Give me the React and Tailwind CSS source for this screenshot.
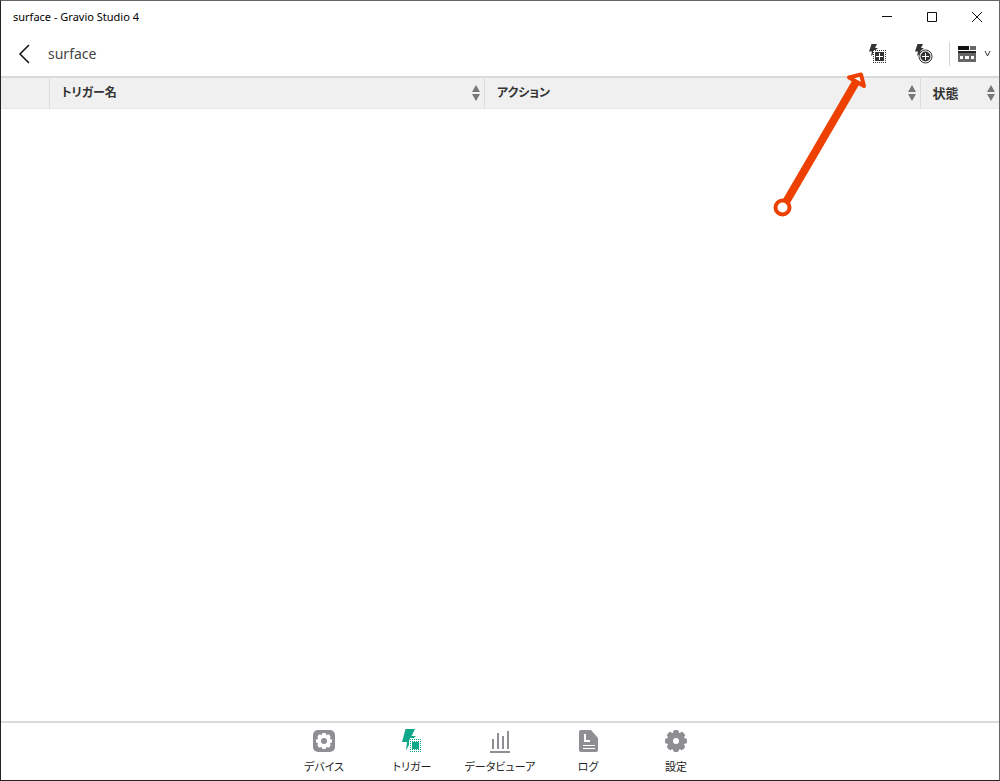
const columns = [
  { label: 'トリガー名', width: '', text: 'text-xs' },
  { label: 'アクション', width: '', text: 'text-xs' },
  { label: '状態', width: 'w-[79px]', text: 'text-[13px]' },
];

const navItems = [
  { id: 'devices', label: 'デバイス', icon: DeviceIcon },
  { id: 'triggers', label: 'トリガー', icon: TriggerIcon },
  { id: 'data', label: 'データビューア', icon: ChartIcon },
  { id: 'logs', label: 'ログ', icon: LogIcon },
  { id: 'settings', label: '設定', icon: SettingsIcon },
];

const gearTeeth = [0, 45, 90, 135, 180, 225, 270, 315];

function Gear({ cx, cy, r, hole, fill, holeFill }) {
  return (
    <g fill={fill}>
      {gearTeeth.map((deg) => (
        <rect
          key={deg}
          x={cx - r * 0.26}
          y={cy - r}
          width={r * 0.52}
          height={r}
          rx={r * 0.16}
          transform={`rotate(${deg} ${cx} ${cy})`}
        />
      ))}
      <circle cx={cx} cy={cy} r={r * 0.82} />
      <circle cx={cx} cy={cy} r={hole} fill={holeFill} />
    </g>
  );
}

function DeviceIcon() {
  return (
    <svg width="24" height="24" viewBox="0 0 24 24">
      <rect x="1" y="1" width="22" height="22" rx="5" fill="#8e8e93" />
      <Gear cx={12} cy={12} r={8} hole={3} fill="#fff" holeFill="#8e8e93" />
    </svg>
  );
}

function TriggerIcon() {
  return (
    <svg width="24" height="24" viewBox="0 0 24 24" fill="#0aa888">
      <path d="M5.500 0H15l-3.500 7H16l-4 3.500H9V16l-3 5.500L7 13H2z" />
      <rect x="10" y="9" width="13" height="14" fill="#fff" />
      <rect x="12" y="13" width="7" height="7" />
      <g stroke="#0aa888" strokeDasharray="1 1">
        <path d="M10 10.500h12M10 12.500h12M10 20.500h12M10 22.500h12" />
        <path d="M10 14.500h2M10 16.500h2M10 18.500h2M20 14.500h2M20 16.500h2M20 18.500h2" />
      </g>
    </svg>
  );
}

function ChartIcon() {
  return (
    <svg width="24" height="24" viewBox="0 0 24 24" fill="#8e8e93">
      <rect x="4" y="10" width="2" height="10" />
      <rect x="9" y="4" width="2" height="16" />
      <rect x="14" y="7" width="2" height="13" />
      <rect x="19" y="2" width="2" height="18" />
      <rect x="2" y="22" width="20" height="2" />
    </svg>
  );
}

function LogIcon() {
  return (
    <svg width="24" height="24" viewBox="0 0 24 24">
      <path d="M5 1h10l7 8v12a2 2 0 0 1-2 2H5a2 2 0 0 1-2-2V3a2 2 0 0 1 2-2z" fill="#8e8e93" />
      <path d="M9 5v7h5" fill="none" stroke="#fff" strokeWidth="2" />
      <path d="M7 16.500h12M7 19.500h12" stroke="#fff" />
    </svg>
  );
}

function SettingsIcon() {
  return (
    <svg width="24" height="24" viewBox="0 0 24 24">
      <Gear cx={12} cy={12} r={11} hole={3} fill="#8e8e93" holeFill="#fff" />
    </svg>
  );
}

function AddTriggerIcon() {
  return (
    <svg width="18" height="20" viewBox="0 0 18 20">
      <path d="M2.500 0H8L6 4H9L5.500 7V9L2 12 3 7.500H0z" fill="#333" />
      <rect x="4" y="6" width="13" height="13" fill="#fff" />
      <path
        d="M4 6.500h13M4 18.500h13M4.500 6v13M16.500 6v13"
        stroke="#333"
        strokeDasharray="1 1"
      />
      <rect x="6" y="8" width="9" height="9" fill="#333" />
      <path d="M7 12.500h7M10.500 9v7" stroke="#fff" />
    </svg>
  );
}

function AddActionIcon() {
  return (
    <svg width="18" height="20" viewBox="0 0 18 20">
      <path d="M2.500 0H8L6 4H9L5.500 7V9L2 12 3 7.500H0z" fill="#333" />
      <circle cx="10.500" cy="12.500" r="6.500" fill="#fff" stroke="#333" />
      <circle cx="10.500" cy="12.500" r="5" fill="#333" />
      <path d="M7 12.500h7M10.500 9v7" stroke="#fff" />
    </svg>
  );
}

function ViewIcon() {
  return (
    <svg width="18" height="16" viewBox="0 0 18 16">
      <rect width="11" height="4" fill="#111" />
      <rect x="12" width="6" height="4" fill="#666" />
      <rect y="5" width="18" height="2" fill="#222" />
      <rect y="7" width="18" height="9" fill="#666" />
      <path d="M2 10h3v3H2zM7 10h4v3H7zM13 10h3v3h-3z" fill="#fff" />
    </svg>
  );
}

function SortIcon() {
  return (
    <svg width="8" height="18" viewBox="0 0 8 18" fill="#777">
      <path d="M4 1l4 7H0zM4 17l4-7H0z" />
    </svg>
  );
}

function Pointer() {
  return (
    <svg
      className="pointer-events-none absolute right-[119px] top-[59px]"
      width="120"
      height="165"
      viewBox="0 0 120 165"
      fill="none"
      stroke="#ee4000"
    >
      <path d="M26 142L96 22" strokeWidth="8" />
      <path d="M89 17.500L101 14.500 104 26z" fill="#fff" strokeWidth="4" strokeLinejoin="round" />
      <path d="M93 27l3-5" strokeWidth="5" />
      <circle cx="22.500" cy="147.500" r="7" fill="#fff" strokeWidth="4" />
    </svg>
  );
}

function TitleBar() {
  return (
    <header className="flex h-8 items-center justify-between pl-3">
      <h1 className="text-[11px] text-black">surface - Gravio Studio 4</h1>
      <div className="flex h-full">
        <button aria-label="Minimize" className="flex w-[45px] items-center justify-center">
          <svg width="10" height="10" stroke="#111"><path d="M0 4.500h10" /></svg>
        </button>
        <button aria-label="Maximize" className="flex w-[45px] items-center justify-center">
          <svg width="10" height="10" fill="none" stroke="#111"><path d="M.5.500h9v9h-9z" /></svg>
        </button>
        <button aria-label="Close" className="flex w-[45px] items-center justify-center">
          <svg width="10" height="10" stroke="#111"><path d="M0 0l10 10M10 0L0 10" /></svg>
        </button>
      </div>
    </header>
  );
}

function Toolbar() {
  return (
    <div className="flex h-[43px] items-center pr-2 pb-0.5 pl-[15px]">
      <button aria-label="Back" className="flex h-8 w-8 items-center">
        <svg width="14" height="20" fill="none" stroke="#111" strokeWidth="1.500">
          <path d="M13 1L4 10l9 9" />
        </svg>
      </button>
      <h2 className="flex-1 text-sm text-[#444]">surface</h2>
      <div className="flex items-center">
        <button aria-label="Add trigger" className="mr-7"><AddTriggerIcon /></button>
        <button aria-label="Add action" className="mr-4"><AddActionIcon /></button>
        <button aria-label="View" className="flex h-6 items-center gap-2 border-l border-[#d4d4d4] pl-2">
          <ViewIcon />
          <svg width="7" height="6" fill="none" stroke="#333"><path d="M1 0l2.500 5L6 0" /></svg>
        </button>
      </div>
    </div>
  );
}

function TriggerTable() {
  return (
    <main className="flex-1 border-t-2 border-[#dadada]">
      <table className="w-full table-fixed border-collapse">
        <thead>
          <tr className="h-[30px] border-b border-[#e6e6e6] bg-[#f0f0f0]">
            <td className="w-12" />
            {columns.map(({ label, width, text }) => (
              <th key={label} scope="col" className={`border-l border-[#dcdcdc] p-0 ${width}`}>
                <button className={`flex w-full items-center justify-between pr-1 pl-3 leading-5 font-bold text-[#333] ${text}`}>
                  {label}
                  <SortIcon />
                </button>
              </th>
            ))}
          </tr>
        </thead>
      </table>
    </main>
  );
}

function BottomNav() {
  return (
    <nav className="flex h-[59px] justify-center border-t-2 border-[#dadada]">
      {navItems.map(({ id, label, icon: Icon }) => (
        <button key={id} className="flex w-[88px] flex-col items-center gap-1 pt-1.5 text-[11px] leading-5 text-[#222]">
          <Icon />
          {label}
        </button>
      ))}
    </nav>
  );
}

export default function App() {
  return (
    <div className="relative flex min-h-screen flex-col border border-t-[#666] border-r-[#666] border-b-[#222] border-l-[#222] bg-white font-['Noto_Sans','Noto_Sans_CJK_JP',sans-serif] [font-feature-settings:'palt']">
      <TitleBar />
      <Toolbar />
      <TriggerTable />
      <BottomNav />
      <Pointer />
    </div>
  );
}
